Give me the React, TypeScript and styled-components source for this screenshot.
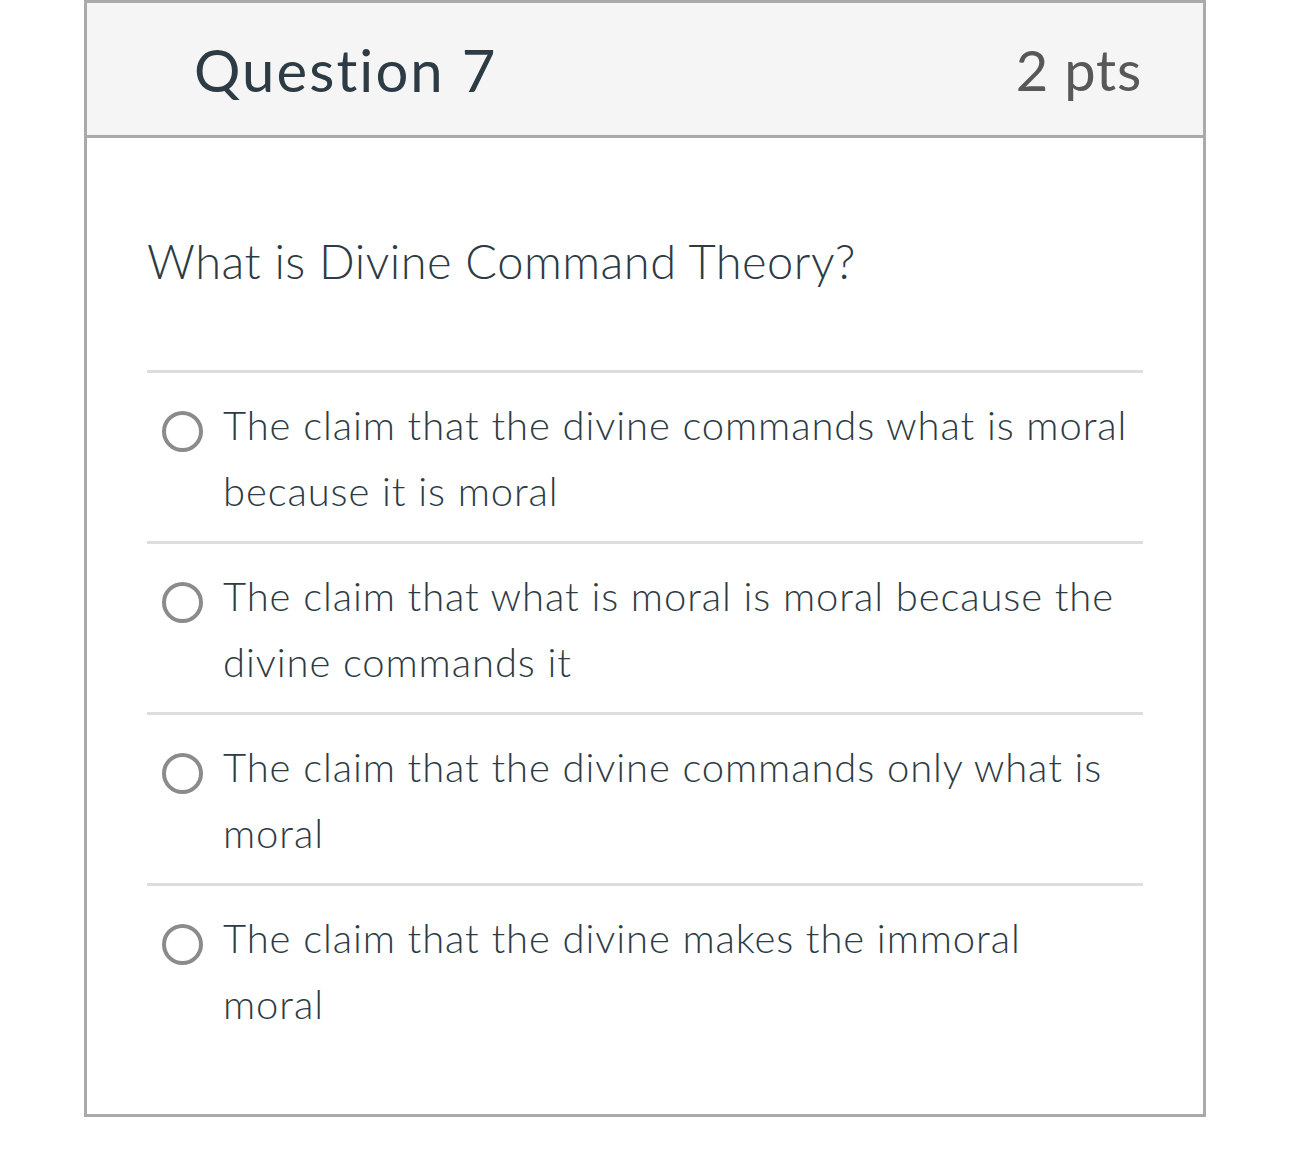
import React from 'react';
import styled, { createGlobalStyle } from 'styled-components';

const GlobalStyle = createGlobalStyle`
  html, body {
    margin: 0;
    padding: 0;
    background: #ffffff;
  }
  body {
    font-family: Lato, 'Open Sans', 'Liberation Sans', sans-serif;
    color: #2d3b45;
  }
`;

const Card = styled.div`
  box-sizing: border-box;
  width: 1122px;
  margin-left: 84px;
  border: 3px solid #aaaaaa;
  background: #ffffff;
`;

const Header = styled.div`
  display: flex;
  align-items: center;
  justify-content: space-between;
  height: 132px;
  padding: 0 61px 0 107px;
  background: #f5f5f5;
  border-bottom: 3px solid #aaaaaa;
`;

const Title = styled.h2`
  margin: 0;
  font-size: 58px;
  font-weight: 400;
  color: #2d3b45;
  letter-spacing: 2.1px;
`;

const Points = styled.span`
  font-size: 56px;
  font-weight: 400;
  color: #585858;
  letter-spacing: 0.8px;
`;

const Body = styled.div`
  padding: 88px 60px 60px 60px;
`;

const Prompt = styled.p`
  margin: 0 0 74px 0;
  font-size: 47px;
  line-height: 70px;
  font-weight: 300;
  letter-spacing: 0.5px;
`;

const AnswerList = styled.div`
  display: flex;
  flex-direction: column;
`;

const Answer = styled.label`
  display: flex;
  align-items: flex-start;
  gap: 20px;
  padding: 19px 0 17px 15px;
  border-top: 3px solid #dddddd;
  cursor: pointer;
`;

const Radio = styled.span`
  flex: none;
  box-sizing: border-box;
  width: 41px;
  height: 41px;
  margin-top: 19px;
  border: 4px solid #8b8b8b;
  border-radius: 50%;
  background: #ffffff;
`;

const AnswerText = styled.span`
  display: flex;
  flex-direction: column;
  font-size: 40px;
  line-height: 66px;
  font-weight: 300;
  letter-spacing: 0.9px;
  color: #2d3b45;
  white-space: nowrap;
`;

const answers = [
  ['The claim that the divine commands what is moral', 'because it is moral'],
  ['The claim that what is moral is moral because the', 'divine commands it'],
  ['The claim that the divine commands only what is', 'moral'],
  ['The claim that the divine makes the immoral', 'moral'],
];

const App = () => {
  return (
    <>
      <GlobalStyle />
      <Card>
        <Header>
          <Title>Question 7</Title>
          <Points>2 pts</Points>
        </Header>
        <Body>
          <Prompt>What is Divine Command Theory?</Prompt>
          <AnswerList>
            {answers.map((lines) => (
              <Answer key={lines.join(' ')}>
                <Radio />
                <AnswerText>
                  {lines.map((line) => (
                    <span key={line}>{line}</span>
                  ))}
                </AnswerText>
              </Answer>
            ))}
          </AnswerList>
        </Body>
      </Card>
    </>
  );
};

export default App;
